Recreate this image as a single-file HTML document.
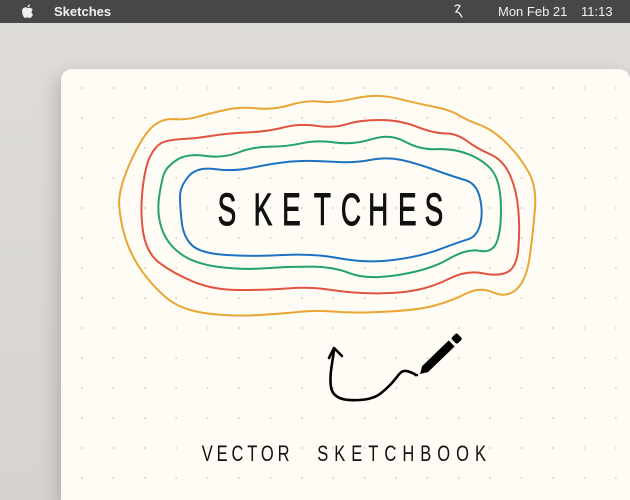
<!DOCTYPE html>
<html><head><meta charset="utf-8"><style>
html,body{margin:0;padding:0;width:630px;height:500px;overflow:hidden;font-family:"Liberation Sans",sans-serif}
body{background:linear-gradient(#dfdcd9,#d6d3d0);position:relative}
.bar{position:absolute;left:0;top:0;width:630px;height:23px;background:#474747;color:#f0f0f0;font-size:13px}
.bar span{position:absolute;top:4px}
.card{position:absolute;left:61px;top:69px;width:569px;height:431px;background:#fffcf5;border-radius:11px 11px 0 0;box-shadow:-4px 6px 18px rgba(0,0,0,.18)}
svg.main{position:absolute;left:0;top:0}
</style></head><body>
<div class="bar">
<svg style="position:absolute;left:21px;top:4px" width="13" height="15" viewBox="0 0 13 15"><path d="M6.5 4C5 3 2 3 1.2 6 .5 9 2.5 14 4.2 14 5.2 14 5.5 13.4 6.5 13.4S8 14 9 14C10.3 14 11.6 11.6 12 10.3 10.3 9.5 10 7 11.8 5.8 10.8 4 8.6 3.3 6.5 4Z M6.6 3.3C6.5 1.9 7.5.6 8.9.4 9 1.8 8 3.2 6.6 3.3Z" fill="#eee"/></svg>
<span style="left:54px;font-weight:bold">Sketches</span>
<svg style="position:absolute;left:452px;top:3px" width="14" height="17" viewBox="0 0 14 17"><path d="M3 3Q6 1 8 3L4 9Q7 9 8 11L10 14" stroke="#eee" stroke-width="1.3" fill="none" stroke-linecap="round"/></svg>
<span style="left:498px">Mon Feb 21</span>
<span style="left:581px">11:13</span>
</div>
<div class="card"></div>
<svg class="main" width="630" height="500" id="s">
<g id="dots" fill="#d8d4cc"></g>
<path id="o" stroke="#eaa634" stroke-width="2" fill="none"/>
<path id="r" stroke="#e0533f" stroke-width="2" fill="none"/>
<path id="g" stroke="#23a36a" stroke-width="2" fill="none"/>
<path id="b" stroke="#1d72c2" stroke-width="2" fill="none"/>
<g transform="scale(0.62,1)" font-family="Liberation Sans" font-size="45" fill="#111" stroke="#111" stroke-width="1" text-anchor="middle">
<text x="366" y="225">S</text><text x="424" y="225">K</text><text x="470" y="225">E</text><text x="520" y="225">T</text><text x="566" y="225">C</text><text x="610" y="225">H</text><text x="657" y="225">E</text><text x="700" y="225">S</text>
</g>
<g transform="scale(0.75,1)" font-family="Liberation Sans" font-size="22" fill="#111">
<text x="269" y="461" textLength="117" lengthAdjust="spacing">VECTOR</text>
<text x="423" y="461" textLength="225" lengthAdjust="spacing">SKETCHBOOK</text>
</g>
<path d="M334 350C333 360 329 375 331 387S345 401 360 400S380 395 390 385S400 368 410 372 413 375 417 375" stroke="#000" stroke-width="2.6" fill="none" stroke-linecap="round"/>
<path d="M329 358L334 348 342 356" stroke="#000" stroke-width="2.6" fill="none" stroke-linecap="round" stroke-linejoin="round"/>
<g transform="translate(420,374) rotate(-44)">
<path d="M0 0L7 -4.2H44V4.2H7Z" fill="#000"/>
<rect x="47" y="-4.2" width="8" height="8.4" rx="2" fill="#000"/>
</g>
</svg>
<script>
function sm(pts,ox,oy){var p=pts.map(function(a){return[a[0]/3+ox,a[1]/3+oy]});var n=p.length,d="";
for(var i=0;i<n;i++){var a=p[i],b=p[(i+1)%n],m=[(a[0]+b[0])/2,(a[1]+b[1])/2];
if(i==0){var l=p[n-1];d+="M"+((l[0]+a[0])/2)+" "+((l[1]+a[1])/2);}
d+=" Q"+a[0]+" "+a[1]+" "+m[0]+" "+m[1];}return d+"Z";}
var O=[[55,330],[120,180],[180,115],[260,120],[330,100],[420,80],[520,90],[620,60],[700,70],[830,40],[950,70],[1050,90],[1100,120],[1180,150],[1260,230],[1310,320],[1300,450],[1280,600],[1220,655],[1140,620],[1060,660],[960,690],[760,700],[650,690],[560,700],[400,710],[240,690],[150,610],[90,520],[60,420]];
var R=[[135,260],[165,200],[200,180],[290,175],[380,160],[500,155],[600,130],[700,145],[780,120],[900,120],[1000,160],[1070,160],[1130,205],[1210,240],[1250,330],[1260,450],[1250,560],[1200,590],[1100,570],[1000,620],[900,640],[760,640],[630,620],[500,630],[340,630],[220,580],[140,520],[120,400]];
var G=[[185,300],[200,260],[260,220],[370,235],[460,200],[560,200],[650,180],[760,195],[870,160],[960,210],[1060,205],[1150,240],[1200,300],[1205,440],[1180,520],[1100,505],[990,570],[800,600],[700,560],[560,560],[420,570],[280,550],[200,490],[170,400]];
var B=[[240,320],[290,260],[400,275],[520,250],[620,240],[760,250],[860,230],[950,250],[1060,290],[1130,310],[1150,400],[1130,470],[1080,485],[960,530],[800,550],[640,520],[460,530],[300,520],[250,470],[240,380]];
document.getElementById('o').setAttribute('d',sm(O,100,80));
document.getElementById('r').setAttribute('d',sm(R,100,80));
document.getElementById('g').setAttribute('d',sm(G,100,80));
document.getElementById('b').setAttribute('d',sm(B,100,80));
var h="";for(var y=88;y<500;y+=30)for(var x=82;x<630;x+=31.4)h+='<circle cx="'+x+'" cy="'+y+'" r="1"/>';
document.getElementById('dots').innerHTML=h;
</script>
</body></html>
